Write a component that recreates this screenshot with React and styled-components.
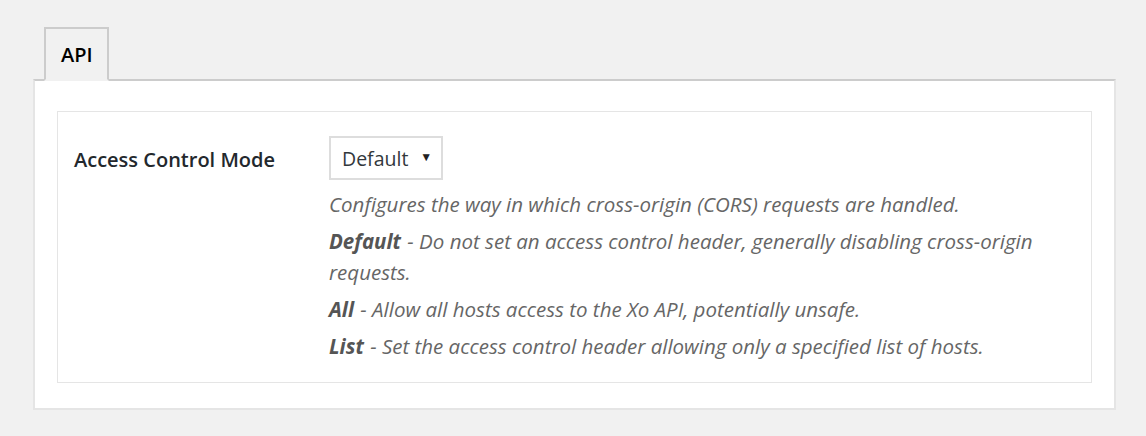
import React from "react";
import styled, { createGlobalStyle } from "styled-components";

const Global = createGlobalStyle`
  html, body { margin: 0; padding: 0; background: #f1f1f1; }
  body { font-family: "Open Sans", "Liberation Sans", sans-serif; }
`;

const Page = styled.div`
  padding: 27px 30px 25px 33px;
`;

const TabBar = styled.div`
  display: flex;
  padding-left: 11px;
  margin-bottom: -2px;
  position: relative;
  z-index: 1;
`;

const Tab = styled.div`
  box-sizing: border-box;
  height: 54px;
  padding: 0 14px 0 15px;
  display: flex;
  align-items: center;
  border: 2px solid #cccccc;
  background: #f1f1f1;
  color: #000;
  font-size: 20px;
  font-weight: 600;
  border-bottom: 2px solid #f1f1f1;
`;

const Panel = styled.div`
  box-sizing: border-box;
  width: 1083px;
  background: #fff;
  border: 2px solid #e5e5e5;
  border-top-color: #cccccc;
  padding: 30px 22px 25px 22px;
`;

const Section = styled.div`
  border: 1px solid #e5e5e5;
  display: grid;
  grid-template-columns: 255px 1fr;
  padding: 24px 16px 20px 16px;
`;

const Label = styled.div`
  font-size: 20px;
  font-weight: 600;
  color: #23282d;
  padding-top: 10px;
  line-height: 28px;
`;

const Field = styled.div`
  display: flex;
  flex-direction: column;
  align-items: flex-start;
`;

const Select = styled.div`
  box-sizing: border-box;
  height: 44px;
  display: flex;
  align-items: center;
  gap: 12px;
  padding: 0 9px 0 11px;
  border: 2px solid #dddddd;
  background: #fff;
  color: #32373c;
  font-size: 19.5px;
  margin-bottom: 9px;
`;

const Arrow = styled.span`
  font-size: 12px;
  color: #222;
  margin-top: -4px;
`;

const Desc = styled.p`
  margin: 0 0 6px 0;
  font-size: 20.5px;
  line-height: 31px;
  font-style: italic;
  color: #666;
  &:last-child { margin-bottom: 0; }
`;

const Term = styled.strong`
  font-weight: 700;
  color: #555;
  margin-right: 1px;
`;

export default function App() {
  return (
    <>
      <Global />
      <Page>
        <TabBar>
          <Tab>API</Tab>
        </TabBar>
        <Panel>
          <Section>
            <Label>Access Control Mode</Label>
            <Field>
              <Select>
                Default <Arrow>▼</Arrow>
              </Select>
              <Desc>Configures the way in which cross-origin (CORS) requests are handled.</Desc>
              <Desc>
                <Term>Default</Term> - Do not set an access control header, generally disabling cross-origin requests.
              </Desc>
              <Desc>
                <Term>All</Term> - Allow all hosts access to the Xo API, potentially unsafe.
              </Desc>
              <Desc>
                <Term>List</Term> - Set the access control header allowing only a specified list of hosts.
              </Desc>
            </Field>
          </Section>
        </Panel>
      </Page>
    </>
  );
}
